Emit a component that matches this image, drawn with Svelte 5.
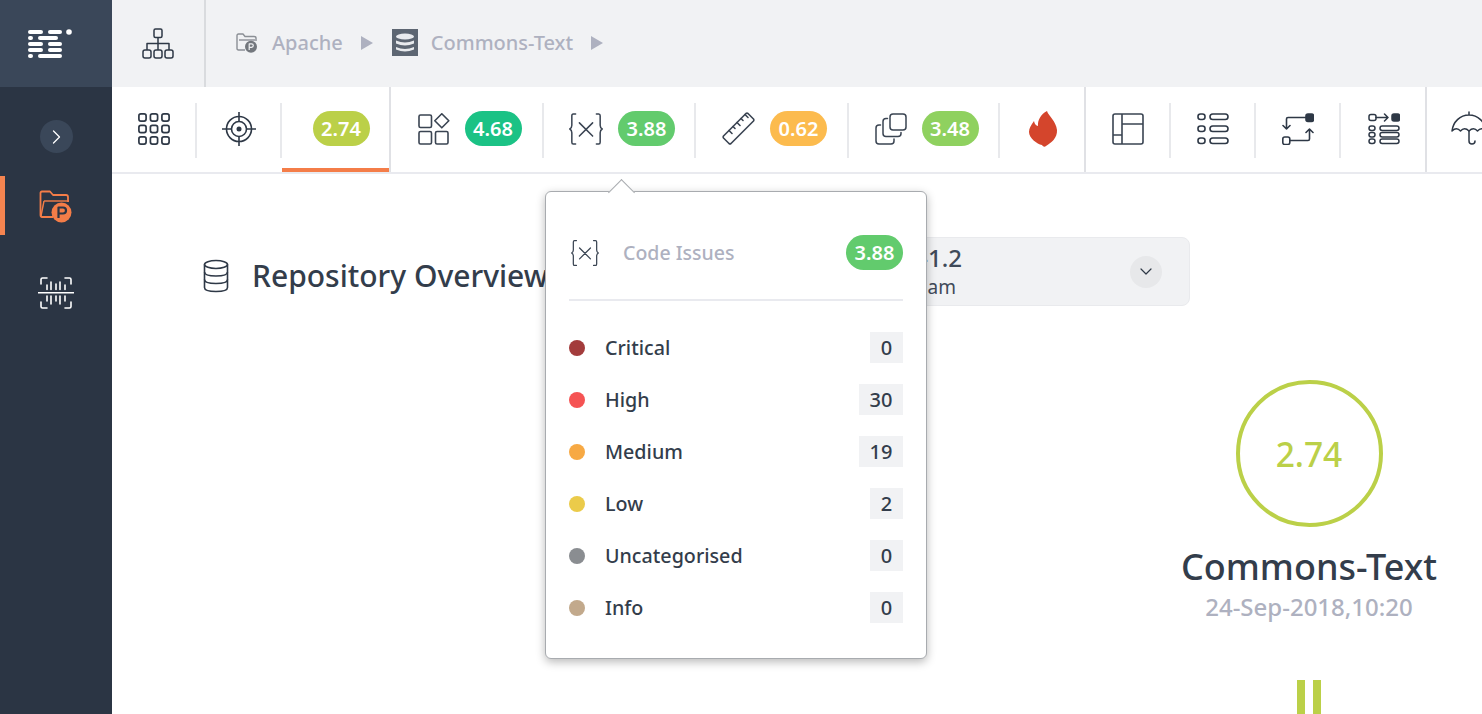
<script lang="ts">
  const severities = [
    { name: 'Critical', count: 0, color: '#a33c3c' },
    { name: 'High', count: 30, color: '#f55353' },
    { name: 'Medium', count: 19, color: '#f7a944' },
    { name: 'Low', count: 2, color: '#ebcb4a' },
    { name: 'Uncategorised', count: 0, color: '#8a8d91' },
    { name: 'Info', count: 0, color: '#c2a98c' }
  ];
</script>

{#snippet curly(size)}
  <svg width={size} height={size} viewBox="0 0 36 36" fill="none" stroke="#3a4452" stroke-width="1.6" stroke-linecap="round" stroke-linejoin="round">
    <path d="M7 2H4.5Q3 2 3 4V14Q3 17 0.8 18Q3 19 3 22V32Q3 34 4.5 34H7" />
    <path d="M29 2h2.5Q33 2 33 4V14Q33 17 35.2 18Q33 19 33 22V32Q33 34 31.5 34H29" />
    <path d="M11 11.5L25 25.5M25 11.5L11 25.5" />
  </svg>
{/snippet}

<div class="app">
  <aside class="sidebar">
    <div class="logo">
      <svg width="44" height="30" viewBox="0 0 44 30" fill="#fff">
        <rect x="0" y="1" width="15" height="4" rx="2" />
        <rect x="20" y="1" width="14" height="4" rx="2" />
        <circle cx="41" cy="3" r="2.8" />
        <rect x="0" y="7" width="5" height="4" rx="2" />
        <rect x="10" y="7" width="20" height="4" rx="2" />
        <rect x="0" y="13" width="15" height="4" rx="2" />
        <rect x="20" y="13" width="14" height="4" rx="2" />
        <rect x="0" y="19" width="15" height="4" rx="2" />
        <rect x="20" y="19" width="14" height="4" rx="2" />
        <rect x="0" y="25" width="5" height="4" rx="2" />
        <rect x="10" y="25" width="24" height="4" rx="2" />
      </svg>
    </div>
    <div class="side-body">
      <button class="toggle" aria-label="Expand">
        <svg width="9" height="14" viewBox="0 0 9 14" fill="none" stroke="#fff" stroke-width="1.3" stroke-linecap="round" stroke-linejoin="round"><path d="M1.5 1L7.5 7L1.5 13" /></svg>
      </button>
      <div class="side-item active">
        <svg width="34" height="34" viewBox="0 0 34 34" fill="none" stroke="#f47d48" stroke-width="1.8" stroke-linejoin="round">
          <path d="M14 28H3Q1.5 28 1.5 26V4Q1.5 2.5 3 2.5H11L14 6H27Q29 6 29 8V13" />
          <path d="M5 12H30" stroke-width="1.4" />
          <path d="M5 12L2 27" stroke-width="1.4" />
          <circle cx="22.5" cy="23.5" r="10" fill="#f47d48" stroke="none" />
          <path d="M19.5 29V18.5H24Q27 18.5 27 21.5T24 24.5H19.5" stroke="#2b3544" stroke-width="2.2" />
        </svg>
      </div>
      <div class="side-item scan">
        <svg width="36" height="34" viewBox="0 0 36 34" fill="none" stroke="#fff" stroke-width="1.6" stroke-linecap="round">
          <path d="M3 8V3.5Q3 2 4.5 2H9M27 2h4.5Q33 2 33 3.5V8M3 26v4.5Q3 32 4.5 32H9M27 32h4.5Q33 32 33 30.5V26" />
          <path d="M0.5 16.8H35.5" />
          <path d="M9 9V13.5M13 6V13.5M18 8V13.5M22 6V13.5M27 9V13.5M9 20V25M13 20V28M18 20V25M22 20V28M27 20V25" />
        </svg>
      </div>
    </div>
  </aside>

  <div class="content">
    <header class="topbar">
      <div class="tree">
        <svg width="32" height="32" viewBox="0 0 32 32" fill="none" stroke="#2e3846" stroke-width="1.5" stroke-linejoin="round">
          <rect x="12" y="1" width="8" height="8.5" rx="1.5" />
          <path d="M16 9.5V15.5M5 22V15.5H27V22M16 15.5V22" />
          <rect x="1" y="22" width="8" height="8" rx="2" />
          <rect x="12" y="22" width="8" height="8" rx="2" />
          <rect x="23" y="22" width="8" height="8" rx="2" />
        </svg>
      </div>
      <nav class="crumbs">
        <svg class="crumb-folder" width="22" height="20" viewBox="0 0 22 20" fill="none" stroke="#8b8f95" stroke-width="1.4" stroke-linejoin="round">
          <path d="M9 17H2.5Q1 17 1 15.5V2.5Q1 1 2.5 1H7L9 3.5H18Q20 3.5 20 5V8" />
          <path d="M3 7H19" />
          <circle cx="15" cy="13.8" r="6" fill="#73777d" stroke="none" />
          <path d="M13.2 17V10.8H15.5Q17.3 10.8 17.3 12.5T15.5 14.3H13.2" stroke="#f1f2f4" stroke-width="1.2" />
        </svg>
        <span class="crumb">Apache</span>
        <span class="caret"></span>
        <svg class="crumb-db" width="26" height="27" viewBox="0 0 26 27">
          <rect width="26" height="27" fill="#5d6672" />
          <ellipse cx="13" cy="7.5" rx="9" ry="3" fill="#e9ebee" />
          <path d="M4 11.5Q13 15.5 22 11.5V14.5Q13 18.5 4 14.5ZM4 18Q13 22 22 18V20.5Q13 24.5 4 20.5Z" fill="#e9ebee" />
        </svg>
        <span class="crumb">Commons-Text</span>
        <span class="caret"></span>
      </nav>
    </header>

    <div class="tabs">
      <div class="tab">
        <svg width="32" height="32" viewBox="0 0 32 32" fill="none" stroke="#2e3846" stroke-width="1.7">
          {#each [0, 11.5, 23] as y}
            {#each [0, 11.5, 23] as x}
              <rect x={x + 0.9} y={y + 0.9} width="7.2" height="7.2" rx="2" />
            {/each}
          {/each}
        </svg>
      </div>
      <div class="tab">
        <svg width="34" height="34" viewBox="0 0 34 34" fill="none" stroke="#2e3846" stroke-width="1.6">
          <circle cx="17" cy="17" r="12.5" />
          <circle cx="17" cy="17" r="7.5" />
          <circle cx="17" cy="17" r="2.5" fill="#2e3846" stroke="none" />
          <path d="M17 0V10M17 24V34M0 17H10M24 17H34" />
        </svg>
      </div>
      <div class="tab selected strong"><span class="pill olive">2.74</span></div>
      <div class="tab scored">
        <svg width="32" height="32" viewBox="0 0 32 32" fill="none" stroke="#3a4452" stroke-width="1.6" stroke-linejoin="round">
          <rect x="1" y="2" width="12.5" height="12.5" rx="1.5" />
          <rect x="1" y="18.5" width="12.5" height="12.5" rx="1.5" />
          <rect x="17.5" y="18.5" width="12.5" height="12.5" rx="1.5" />
          <path d="M23.8 0.8L30.8 7.8L23.8 14.8L16.8 7.8Z" />
        </svg>
        <span class="pill teal">4.68</span>
      </div>
      <div class="tab scored">
        {@render curly(34)}
        <span class="pill green">3.88</span>
      </div>
      <div class="tab scored">
        <svg width="33" height="33" viewBox="0 0 33 33" fill="none" stroke="#3a4452" stroke-width="1.6" stroke-linejoin="round" stroke-linecap="round">
          <path d="M1.5 24L24 1.5Q25 0.8 26 1.5L31.5 7Q32.2 8 31.5 9L9 31.5Q8 32.2 7 31.5L1.5 26Q0.8 25 1.5 24Z" />
          <path d="M7 18.5L10 21.5M11 14.5L13 16.5M15 10.5L18 13.5M19 6.5L21 8.5M23 2.5L26 5.5" />
        </svg>
        <span class="pill amber">0.62</span>
      </div>
      <div class="tab scored">
        <svg width="32" height="32" viewBox="0 0 32 32" fill="none" stroke="#3a4452" stroke-width="1.5" stroke-linejoin="round" stroke-linecap="round">
          <rect x="15" y="1" width="16" height="16" rx="3" />
          <path d="M12.5 5.5H11Q8 5.5 8 8.5V20.5Q8 23.5 11 23.5H23Q26 23.5 26 20.5V19.5" />
          <path d="M5.5 12H4Q1 12 1 15V28Q1 31 4 31H16Q19 31 19 28V26" />
        </svg>
        <span class="pill lime">3.48</span>
      </div>
      <div class="tab strong">
        <svg width="30" height="36" viewBox="0 0 30 36">
          <path d="M19 0C20.5 5 28 10 29 19C29.5 27 23 32 18 35C17 36 15 36 14 34C9 33 1 27 1 21C1 17.5 3 14 6 10C6.5 13 8 14.5 10 15C9.5 9 13 3 19 0Z" fill="#d4452c" />
        </svg>
      </div>
      <div class="tab">
        <svg width="32" height="32" viewBox="0 0 32 32" fill="none" stroke="#3a4452" stroke-width="1.6" stroke-linejoin="round">
          <rect x="1" y="1" width="30" height="30" rx="2" />
          <path d="M10 1V31M10 11H31M1 22H10" />
        </svg>
      </div>
      <div class="tab">
        <svg width="32" height="32" viewBox="0 0 32 32" fill="none" stroke="#2e3846" stroke-width="1.6">
          {#each [1, 13, 25] as y}
            <rect x="1" {y} width="7" height="5.5" rx="2.5" />
            <rect x="13" {y} width="18" height="5.5" rx="2.75" />
          {/each}
        </svg>
      </div>
      <div class="tab">
        <svg width="32" height="32" viewBox="0 0 32 32" fill="none" stroke="#2e3846" stroke-width="1.6" stroke-linecap="round" stroke-linejoin="round">
          <rect x="24" y="1" width="7.5" height="7.5" rx="2" fill="#2e3846" />
          <rect x="0.8" y="24" width="7" height="7.5" rx="2" />
          <path d="M24 4.5H6Q4.5 4.5 4.5 6V16M1 12.5L4.5 16L8 12.5" />
          <path d="M8 27.5H26Q27.5 27.5 27.5 26V16M24 19.5L27.5 16L31 19.5" />
        </svg>
      </div>
      <div class="tab strong">
        <svg width="32" height="32" viewBox="0 0 32 32" fill="none" stroke="#2e3846" stroke-width="1.5" stroke-linecap="round" stroke-linejoin="round">
          <rect x="1" y="1.5" width="7" height="6" rx="2" />
          <rect x="24" y="1" width="7.5" height="7" rx="2" fill="#2e3846" />
          <path d="M8 4.5H20M16.5 1L20 4.5L16.5 8" />
          {#each [13, 19.5, 26] as y}
            <rect x="1" {y} width="6" height="4.5" rx="2.2" />
            <rect x="12" {y} width="19" height="4.5" rx="2.2" />
          {/each}
        </svg>
      </div>
      <div class="tab open">
        <svg width="36" height="36" viewBox="0 0 36 36" fill="none" stroke="#2e3846" stroke-width="1.5" stroke-linecap="round" stroke-linejoin="round">
          <path d="M18 1V4M1 20C2 11 9 4 18 4S34 11 35 20C32 17 29 17 26.5 20C24 17 21 17 18 20C15 17 12 17 9.5 20C7 17 4 17 1 20Z" />
          <path d="M18 20V30Q18 33 21 33T24 30" />
        </svg>
      </div>
    </div>

    <main class="page">
      <div class="overview">
        <div class="title-row">
          <svg width="26" height="34" viewBox="0 0 26 34" fill="none" stroke="#2e3846" stroke-width="1.6">
            <ellipse cx="13" cy="5.5" rx="11.5" ry="4" />
            <path d="M1.5 5.5V28.5C1.5 31 6.5 32.5 13 32.5S24.5 31 24.5 28.5V5.5" />
            <path d="M1.5 13C1.5 15.5 6.5 17 13 17S24.5 15.5 24.5 13M1.5 20.5C1.5 23 6.5 24.5 13 24.5S24.5 23 24.5 20.5" />
          </svg>
          <h1>Repository Overview</h1>
        </div>
        <div class="version">
          <div class="version-text">
            <div class="version-name">-1.2</div>
            <div class="version-date">am</div>
          </div>
          <span class="chevron">
            <svg width="12" height="7" viewBox="0 0 12 7" fill="none" stroke="#2e3846" stroke-width="1.2" stroke-linecap="round" stroke-linejoin="round"><path d="M1 1L6 6L11 1" /></svg>
          </span>
        </div>
      </div>

      <section class="summary">
        <div class="score-ring">2.74</div>
        <div class="repo-name">Commons-Text</div>
        <div class="repo-date">24-Sep-2018,10:20</div>
        <div class="pause"><i></i><i></i></div>
      </section>
    </main>

    <div class="popover">
      <div class="pop-head">
        {@render curly(28)}
        <span class="pop-title">Code Issues</span>
        <span class="pill green">3.88</span>
      </div>
      <ul class="pop-list">
        {#each severities as s}
          <li>
            <span class="dot" style="background: {s.color}"></span>
            <span class="sev-name">{s.name}</span>
            <span class="sev-count">{s.count}</span>
          </li>
        {/each}
      </ul>
    </div>
  </div>
</div>

<style>
  :global(body) {
    margin: 0;
    overflow: hidden;
    background: #fff;
    font-family: "Noto Sans", "Open Sans", sans-serif;
  }

  .app {
    display: flex;
    width: 1482px;
    height: 714px;
    overflow: hidden;
  }

  .sidebar {
    width: 112px;
    flex: none;
    display: flex;
    flex-direction: column;
    background: #2b3544;
  }

  .logo {
    height: 87px;
    display: flex;
    align-items: center;
    justify-content: center;
    padding-right: 12px;
    box-sizing: border-box;
    background: #3a4759;
  }

  .side-body {
    display: flex;
    flex-direction: column;
    align-items: center;
    padding-top: 33px;
  }

  .toggle {
    width: 33px;
    height: 33px;
    padding: 0;
    border: 0;
    border-radius: 50%;
    display: flex;
    align-items: center;
    justify-content: center;
    background: #3a4759;
  }

  .side-item {
    width: 100%;
    height: 59px;
    margin-top: 23px;
    display: flex;
    align-items: center;
    justify-content: center;
    box-sizing: border-box;
  }

  .side-item.active {
    border-left: 5px solid #f58450;
    padding-right: 5px;
  }

  .side-item.scan {
    margin-top: 28px;
  }

  .content {
    position: relative;
    flex: 1;
    min-width: 0;
    display: flex;
    flex-direction: column;
  }

  .topbar {
    height: 87px;
    flex: none;
    display: flex;
    background: #f1f2f4;
  }

  .tree {
    width: 92px;
    display: flex;
    align-items: center;
    justify-content: center;
    border-right: 2px solid #d9dbde;
  }

  .crumbs {
    display: flex;
    align-items: center;
    padding: 0 0 2px 30px;
  }

  .crumb {
    font-size: 20px;
    font-weight: 500;
    color: #aeb1c0;
  }

  .crumb-folder {
    margin-right: 14px;
  }

  .crumb-db {
    margin-right: 13px;
  }

  .caret {
    width: 0;
    height: 0;
    margin: 0 19px 0 18px;
    border-left: 12px solid #aeb1c0;
    border-top: 7.5px solid transparent;
    border-bottom: 7.5px solid transparent;
  }

  .tabs {
    height: 87px;
    flex: none;
    display: grid;
    grid-template-columns: 85px 85px 109px 153px 152px 153px 151px 86px 85px 85px 85px 86px 1fr;
    box-sizing: border-box;
    border-bottom: 2px solid #e9eaef;
  }

  .tab {
    position: relative;
    display: flex;
    align-items: center;
    justify-content: center;
    gap: 15px;
    padding: 0 1px 2px 0;
  }

  .tab::after {
    content: "";
    position: absolute;
    right: 0;
    top: 16px;
    height: 55px;
    width: 2px;
    background: #e8e9ec;
  }

  .tab.scored {
    padding-left: 4px;
    padding-right: 0;
  }

  .tab.selected {
    padding-left: 9px;
    padding-right: 0;
  }

  .tab.selected::before {
    content: "";
    position: absolute;
    left: 0;
    right: 1px;
    bottom: 0;
    height: 4px;
    background: #f47d48;
  }

  .tab.strong::after {
    top: 0;
    height: 100%;
    background: #e0e1e5;
  }

  .tab.open {
    justify-content: flex-start;
    padding-left: 24px;
    gap: 0;
  }

  .tab.open::after {
    display: none;
  }

  .tab.open svg {
    flex: none;
  }

  .pill {
    display: inline-flex;
    align-items: center;
    justify-content: center;
    min-width: 57px;
    height: 35px;
    border-radius: 17.5px;
    color: #fff;
    font-size: 20px;
    font-weight: 600;
  }

  .olive {
    background: #bbd048;
  }

  .teal {
    background: #1bc285;
  }

  .green {
    background: #62cb6d;
  }

  .amber {
    background: #fcbb4e;
  }

  .lime {
    background: #8fd15f;
  }

  .page {
    flex: 1;
    min-height: 0;
    display: flex;
    flex-direction: column;
    overflow: hidden;
    padding: 63px 0 0 91px;
  }

  .overview {
    display: flex;
    align-items: flex-start;
    gap: 12px;
    flex: none;
  }

  .title-row {
    display: flex;
    align-items: center;
    gap: 23px;
    flex: none;
    width: 357px;
    height: 78px;
  }

  .title-row h1 {
    margin: 0;
    padding-bottom: 2px;
    font-size: 30px;
    font-weight: 500;
    color: #333d4b;
    white-space: nowrap;
  }

  .version {
    width: 618px;
    height: 69px;
    flex: none;
    display: flex;
    align-items: center;
    box-sizing: border-box;
    padding-right: 27px;
    border: 1px solid #e9eaed;
    border-radius: 8px;
    background: #f1f2f4;
  }

  .version-text {
    width: 389px;
    padding-top: 1px;
    text-align: right;
    color: #3f4a59;
  }

  .version-name {
    font-size: 24px;
    line-height: 30px;
    font-weight: 500;
  }

  .version-date {
    font-size: 19px;
    line-height: 28px;
    padding-right: 6px;
  }

  .chevron {
    width: 32px;
    height: 32px;
    margin-left: auto;
    border-radius: 50%;
    display: flex;
    align-items: center;
    justify-content: center;
    background: #e7e8ea;
  }

  .summary {
    align-self: flex-end;
    width: 346px;
    margin-top: 65px;
    flex: none;
    display: flex;
    flex-direction: column;
    align-items: center;
  }

  .score-ring {
    width: 147px;
    height: 147px;
    box-sizing: border-box;
    border: 4px solid #bbd048;
    border-radius: 50%;
    display: flex;
    align-items: center;
    justify-content: center;
    color: #bbd048;
    font-size: 33.5px;
    font-weight: 500;
  }

  .repo-name {
    margin-top: 17px;
    font-size: 36px;
    line-height: 46px;
    font-weight: 500;
    color: #333d4b;
  }

  .repo-date {
    margin-top: 2px;
    font-size: 24px;
    line-height: 30px;
    font-weight: 500;
    color: #aeb1c0;
  }

  .pause {
    display: flex;
    gap: 8px;
    margin-top: 58px;
  }

  .pause i {
    width: 8px;
    height: 40px;
    background: #bbd048;
  }

  .popover {
    position: absolute;
    left: 433px;
    top: 191px;
    width: 382px;
    height: 468px;
    box-sizing: border-box;
    padding: 0 23px;
    background: #fff;
    border: 1px solid #a8abaf;
    border-radius: 6px;
    box-shadow: 0 3px 10px rgba(0, 0, 0, 0.28);
  }

  .popover::before {
    content: "";
    position: absolute;
    left: 66px;
    top: -9px;
    width: 18px;
    height: 18px;
    transform: rotate(45deg);
    background: #fff;
    border-left: 1px solid #a8abaf;
    border-top: 1px solid #a8abaf;
  }

  .pop-head {
    height: 109px;
    display: flex;
    align-items: center;
    box-sizing: border-box;
    border-bottom: 2px solid #e9eaef;
    padding: 14px 0 0 2px;
  }

  .pop-title {
    margin-left: 24px;
    flex: 1;
    font-size: 19.5px;
    font-weight: 500;
    color: #aeb1c0;
  }

  .pop-list {
    list-style: none;
    margin: 0;
    padding: 20px 0 0;
  }

  .pop-list li {
    display: flex;
    align-items: center;
    height: 52px;
  }

  .dot {
    width: 16px;
    height: 16px;
    border-radius: 50%;
    margin: 1px 20px 0 0;
  }

  .sev-name {
    flex: 1;
    font-size: 19.7px;
    font-weight: 500;
    color: #333d4b;
  }

  .sev-count {
    min-width: 33px;
    height: 31px;
    box-sizing: border-box;
    padding: 0 10.5px;
    display: flex;
    align-items: center;
    justify-content: center;
    font-size: 20px;
    font-weight: 500;
    color: #333d4b;
    background: #f1f2f4;
  }
</style>
